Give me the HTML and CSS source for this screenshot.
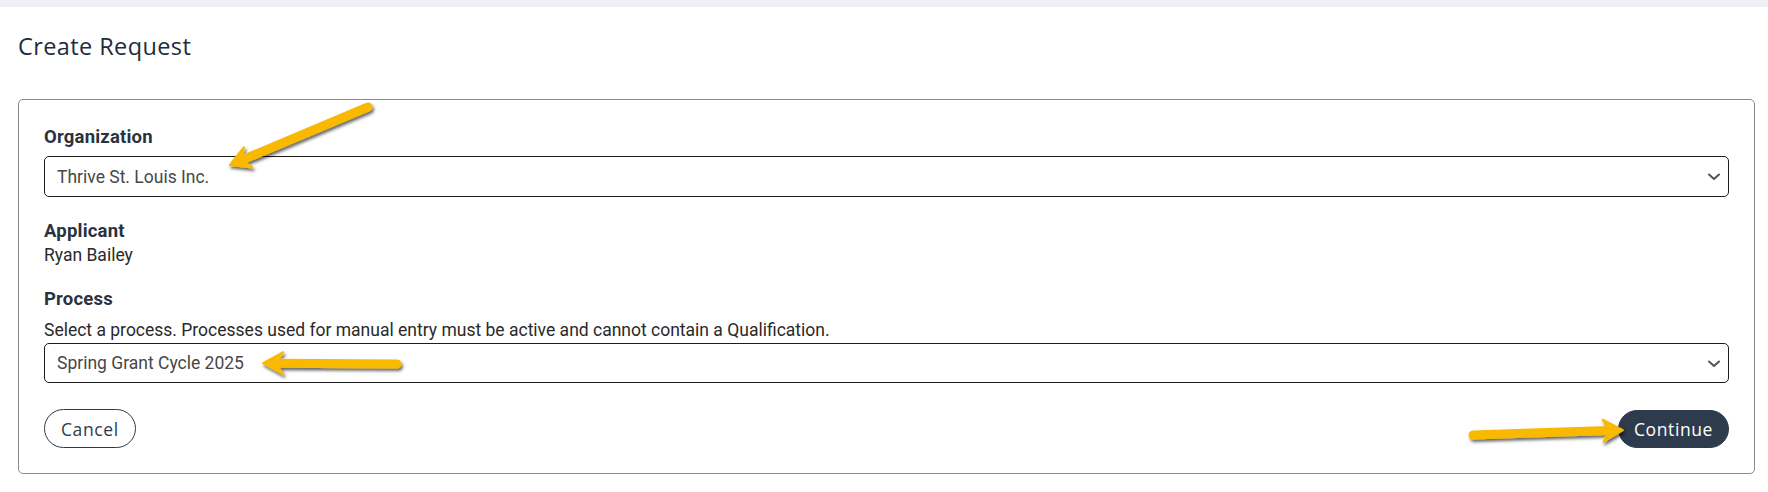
FILE: index.html
```html
<!DOCTYPE html>
<html lang="en">
<head>
<meta charset="utf-8">
<title>Create Request</title>
<link rel="stylesheet" href="styles.css">
</head>
<body>
<div class="band"></div>
<main class="page">
  <h1 class="title">Create Request</h1>
  <section class="card">
    <div class="field">
      <div class="label">Organization</div>
      <div class="select">
        <span class="select-value">Thrive St. Louis Inc.</span>
        <svg class="chev" width="12" height="8" viewBox="0 0 12 8"><path d="M1 1.5 L6 6 L11 1.5" fill="none" stroke="#555" stroke-width="2" stroke-linecap="round" stroke-linejoin="round"/></svg>
      </div>
    </div>
    <div class="field applicant">
      <div class="label">Applicant</div>
      <div class="value">Ryan Bailey</div>
    </div>
    <div class="field process">
      <div class="label">Process</div>
      <div class="help">Select a process. Processes used for manual entry must be active and cannot contain a Qualification.</div>
      <div class="select">
        <span class="select-value">Spring Grant Cycle 2025</span>
        <svg class="chev" width="12" height="8" viewBox="0 0 12 8"><path d="M1 1.5 L6 6 L11 1.5" fill="none" stroke="#555" stroke-width="2" stroke-linecap="round" stroke-linejoin="round"/></svg>
      </div>
    </div>
    <div class="actions">
      <button class="btn btn-outline">Cancel</button>
      <button class="btn btn-dark">Continue</button>
    </div>
  </section>
</main>
<svg class="annotations" width="1768" height="492" viewBox="0 0 1768 492">
  <defs>
    <filter id="sh" x="-20%" y="-50%" width="140%" height="200%">
      <feDropShadow dx="1.5" dy="2.5" stdDeviation="1.6" flood-color="#000" flood-opacity="0.6"/>
    </filter>
  </defs>
  <g filter="url(#sh)" fill="#f8b902" stroke="#f8b902">
    <g transform="translate(368,107) rotate(157.2)">
      <line x1="0" y1="0" x2="136" y2="0" stroke-width="9" stroke-linecap="round"/>
      <polygon points="150,0 130,-11 134,-4.5 134,4.5 130,11" stroke-width="2" stroke-linejoin="round"/>
    </g>
  </g>
  <g filter="url(#sh)" fill="#f8b902" stroke="#f8b902">
    <g transform="translate(397,364) rotate(180.4)">
      <line x1="0" y1="0" x2="120" y2="0" stroke-width="9" stroke-linecap="round"/>
      <polygon points="134,0 114,-11 118,-4.5 118,4.5 114,11" stroke-width="2" stroke-linejoin="round"/>
    </g>
  </g>
  <g filter="url(#sh)" fill="#f8b902" stroke="#f8b902">
    <g transform="translate(1473,435) rotate(-1.9)">
      <line x1="0" y1="0" x2="136" y2="0" stroke-width="9" stroke-linecap="round"/>
      <polygon points="150,0 130,-11 134,-4.5 134,4.5 130,11" stroke-width="2" stroke-linejoin="round"/>
    </g>
  </g>
</svg>
</body>
</html>
```

FILE: styles.css
```css
* { box-sizing: border-box; }

html, body {
  margin: 0;
  padding: 0;
  background: #ffffff;
}

body {
  position: relative;
  width: 1768px;
  height: 492px;
  overflow: hidden;
  font-family: Roboto, "Liberation Sans", Arial, sans-serif;
  color: #2b2b2b;
}

.band {
  height: 7px;
  background: #eff0f5;
}

.page {
  padding: 0 13px 0 18px;
}

.title {
  margin: 23px 0 36px;
  font-family: "Open Sans", "Liberation Sans", sans-serif;
  font-weight: 400;
  font-size: 23.5px;
  letter-spacing: 0.4px;
  line-height: 33px;
  color: #1f2b3b;
}

.card {
  border: 1px solid #8a8a8a;
  border-radius: 5px;
  padding: 25px;
}

.label {
  font-weight: 700;
  font-size: 18.5px;
  line-height: 24px;
  letter-spacing: 0.2px;
  color: #29333f;
  margin-bottom: 7px;
}

.applicant .label {
  margin-bottom: 0;
}

.applicant {
  margin-top: 22px;
}

.process {
  margin-top: 20px;
}

.value,
.help {
  font-size: 17.5px;
  line-height: 24px;
  color: #2a2a2a;
}

.help {
  margin-bottom: 1px;
}

.select {
  display: flex;
  align-items: center;
  justify-content: space-between;
  height: 41px;
  border: 1px solid #1c1c1c;
  border-radius: 5px;
  padding: 0 8px 0 12px;
  font-size: 17.5px;
  color: #474747;
  background: #fff;
}

.process .select {
  height: 40px;
}

.chev {
  display: block;
  margin-top: 1px;
}

.actions {
  display: flex;
  justify-content: space-between;
  align-items: center;
  margin-top: 26px;
}

.btn {
  font-family: "Open Sans", "Liberation Sans", sans-serif;
  font-size: 17.5px;
  letter-spacing: 0.6px;
  height: 39px;
  border-radius: 20px;
  padding: 0 16px;
  cursor: pointer;
}

.btn-outline {
  background: #ffffff;
  border: 1px solid #2e3b4c;
  color: #2e3b4c;
}

.btn-dark {
  height: 38px;
  background: #2e3b4c;
  border: 1px solid #2e3b4c;
  color: #ffffff;
  padding: 0 15px;
}

.annotations {
  position: absolute;
  top: 0;
  left: 0;
  pointer-events: none;
}
```
